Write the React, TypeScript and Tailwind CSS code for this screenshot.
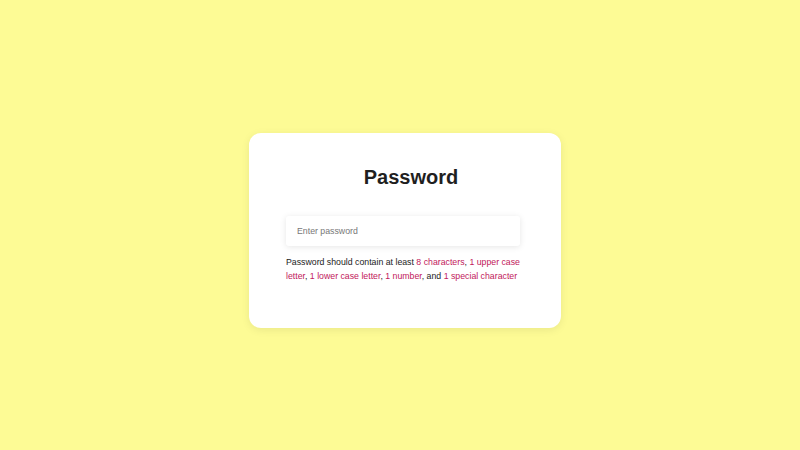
import { useState } from 'react';

// highlighted requirement words
function Req({ children }: { children: React.ReactNode }) {
  return <span className="text-[#c2185b]">{children}</span>;
}

export default function App() {
  const [value, setValue] = useState('');

  return (
    <div className="flex h-screen w-full items-center justify-center bg-[#fdfb95] pl-[10px] pt-[10px] font-['Liberation_Sans',Arial,sans-serif]">
      <div className="w-[312px] rounded-xl bg-white pb-[45px] pl-[37px] pr-[41px] pt-[30px] shadow-[0_2px_8px_rgba(0,0,0,0.08)]">
        <h1 className="pl-[16px] text-center text-[20px] font-bold leading-[28px] text-[#1f1f1f]">Password</h1>
        <input
          type="password"
          value={value}
          onChange={(e) => setValue(e.target.value)}
          placeholder="Enter password"
          className="mt-[25px] block h-[30px] w-full rounded-[3px] bg-white px-[11px] text-[8.75px] text-[#333] shadow-[0_1px_6px_rgba(0,0,0,0.1)] outline-none placeholder:text-[#777]"
        />
        <p className="mt-[9px] text-[8.75px] leading-[14px] text-[#222]">
          Password should contain at least <Req>8 characters</Req>, <Req>1 upper case letter</Req>,{' '}
          <Req>1 lower case letter</Req>, <Req>1 number</Req>, and <Req>1 special character</Req>
        </p>
      </div>
    </div>
  );
}
